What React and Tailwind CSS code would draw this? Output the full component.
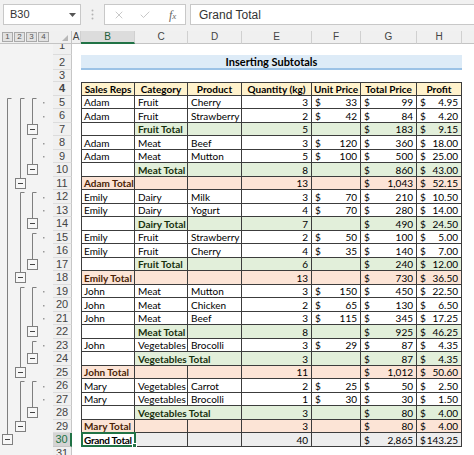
import React from "react";
import { X, Check } from "lucide-react";

// L1/L2/L3 outline codes: s = group start, l = line, m = minus button
const ROWS = [
  { n: 5, t: "d", o: "sss", b: "Adam", c: "Fruit", d: "Cherry", q: 3, u: "33", p: "99", f: "4.95" },
  { n: 6, t: "d", o: "lll", b: "Adam", c: "Fruit", d: "Strawberry", q: 2, u: "42", p: "84", f: "4.20" },
  { n: 7, t: "c", o: "llm", c: "Fruit Total", q: 5, p: "183", f: "9.15" },
  { n: 8, t: "d", o: "lls", b: "Adam", c: "Meat", d: "Beef", q: 3, u: "120", p: "360", f: "18.00" },
  { n: 9, t: "d", o: "lll", b: "Adam", c: "Meat", d: "Mutton", q: 5, u: "100", p: "500", f: "25.00" },
  { n: 10, t: "c", o: "llm", c: "Meat Total", q: 8, p: "860", f: "43.00" },
  { n: 11, t: "r", o: "lm-", b: "Adam Total", q: 13, p: "1,043", f: "52.15" },
  { n: 12, t: "d", o: "lss", b: "Emily", c: "Dairy", d: "Milk", q: 3, u: "70", p: "210", f: "10.50" },
  { n: 13, t: "d", o: "lll", b: "Emily", c: "Dairy", d: "Yogurt", q: 4, u: "70", p: "280", f: "14.00" },
  { n: 14, t: "c", o: "llm", c: "Dairy Total", q: 7, p: "490", f: "24.50" },
  { n: 15, t: "d", o: "lls", b: "Emily", c: "Fruit", d: "Strawberry", q: 2, u: "50", p: "100", f: "5.00" },
  { n: 16, t: "d", o: "lll", b: "Emily", c: "Fruit", d: "Cherry", q: 4, u: "35", p: "140", f: "7.00" },
  { n: 17, t: "c", o: "llm", c: "Fruit Total", q: 6, p: "240", f: "12.00" },
  { n: 18, t: "r", o: "lm-", b: "Emily Total", q: 13, p: "730", f: "36.50" },
  { n: 19, t: "d", o: "lss", b: "John", c: "Meat", d: "Mutton", q: 3, u: "150", p: "450", f: "22.50" },
  { n: 20, t: "d", o: "lll", b: "John", c: "Meat", d: "Chicken", q: 2, u: "65", p: "130", f: "6.50" },
  { n: 21, t: "d", o: "lll", b: "John", c: "Meat", d: "Beef", q: 3, u: "115", p: "345", f: "17.25" },
  { n: 22, t: "c", o: "llm", c: "Meat Total", q: 8, p: "925", f: "46.25" },
  { n: 23, t: "d", o: "lls", b: "John", c: "Vegetables", d: "Brocolli", q: 3, u: "29", p: "87", f: "4.35" },
  { n: 24, t: "c", o: "llm", c: "Vegetables Total", q: 3, p: "87", f: "4.35" },
  { n: 25, t: "r", o: "lm-", b: "John Total", q: 11, p: "1,012", f: "50.60" },
  { n: 26, t: "d", o: "lss", b: "Mary", c: "Vegetables", d: "Carrot", q: 2, u: "25", p: "50", f: "2.50" },
  { n: 27, t: "d", o: "lll", b: "Mary", c: "Vegetables", d: "Brocolli", q: 1, u: "30", p: "30", f: "1.50" },
  { n: 28, t: "c", o: "llm", c: "Vegetables Total", q: 3, p: "80", f: "4.00" },
  { n: 29, t: "r", o: "lm-", b: "Mary Total", q: 3, p: "80", f: "4.00" },
  { n: 30, t: "g", o: "m--", b: "Grand Total", q: 40, p: "2,865", f: "143.25" },
];

const LINE = "#7f7f7f";

function Outline({ codes, dot, h }) {
  const xs = [7, 20, 32];
  return (
    <svg width="53" height={h} className="block">
      {codes.split("").map((c, i) => {
        const x = xs[i] + 0.5;
        if (c === "s")
          return (
            <g key={i} stroke={LINE}>
              <line x1={x} y1={2.5} x2={x} y2={h} />
              <line x1={x} y1={2.5} x2={x + 4} y2={2.5} />
            </g>
          );
        if (c === "l") return <line key={i} x1={x} y1={0} x2={x} y2={h} stroke={LINE} />;
        if (c === "m") {
          const top = Math.floor((h - 11) / 2);
          return (
            <g key={i}>
              <line x1={x} y1={0} x2={x} y2={top} stroke={LINE} />
              <rect x={xs[i] - 4.5} y={top + 0.5} width="10" height="10" fill="#f7f7f7" stroke={LINE} />
              <line x1={xs[i] - 2} y1={top + 5.5} x2={xs[i] + 3} y2={top + 5.5} stroke="#444" />
            </g>
          );
        }
        return null;
      })}
      {dot && <rect x="43" y={Math.floor(h / 2)} width="1.5" height="1.5" fill="#999" />}
    </svg>
  );
}

function RowHead({ n, active }) {
  return (
    <div
      className={`w-[19px] shrink-0 flex items-center justify-center border-b text-[11px] font-[Liberation_Sans,sans-serif] ${
        active
          ? "bg-[#d4d4d4] text-[#217346] border-b-[#c6c6c6] border-r-2 border-r-[#217346]"
          : "bg-[#f0f0f0] text-[#444] border-b-[#dcdcdc] border-r border-r-[#c6c6c6]"
      }`}
    >
      {n}
    </div>
  );
}

const CELL = "shrink-0 border-r border-b border-[#3c3c3c] flex items-center px-[3px] whitespace-nowrap";

function Money({ v, bg, w }) {
  return (
    <div className={`${CELL} ${w} ${bg} justify-between`}>
      {v ? (
        <>
          <span>$</span>
          <span>{v}</span>
        </>
      ) : null}
    </div>
  );
}

function DataRow({ r, h }) {
  const bg =
    r.t === "c" ? "bg-[#e2efda]" : r.t === "r" ? "bg-[#fce4d6]" : r.t === "g" ? "bg-[#ededed]" : "bg-white";
  const bBg = r.t === "r" ? "bg-[#fce4d6]" : "bg-white";
  const wide = r.t === "c" && r.c.length > 12;
  return (
    <div className={`flex ${h}`}>
      <div className="w-[53px] shrink-0 bg-[#f3f3f3]">
        <Outline codes={r.o} dot={r.t === "d"} h={h === "h-[14px]" ? 14 : 13} />
      </div>
      <RowHead n={r.n} active={r.t === "g"} />
      <div className="w-[9px] shrink-0 bg-white" />
      <div
        className={`shrink-0 border-r border-b border-l border-[#3c3c3c] flex items-center pl-[2px] whitespace-nowrap w-[54px] ${bBg} relative ${
          r.t === "r" ? "font-bold text-[#4a1f06]" : r.t === "g" ? "font-bold tracking-[-0.3px]" : ""
        }`}
      >
        {r.b}
        {r.t === "g" && (
          <div className="absolute -left-[1px] -top-[1px] w-[55px] h-[15px] border-2 border-[#217346]">
            <div className="absolute -right-[3px] -bottom-[3px] w-[5px] h-[5px] bg-[#217346] border border-white" />
          </div>
        )}
      </div>
      <div
        className={`shrink-0 border-b border-[#3c3c3c] flex items-center px-[3px] whitespace-nowrap w-[53px] ${bg} ${
          wide ? "overflow-visible z-10" : "border-r"
        } ${r.t === "c" ? "font-bold text-[#17300d]" : ""}`}
      >
        {r.c}
      </div>
      <div className={`${CELL} w-[54px] ${bg}`}>{r.d}</div>
      <div className={`${CELL} w-[70px] ${bg} justify-end`}>{r.q}</div>
      <Money v={r.u} bg={bg} w="w-[49px]" />
      <Money v={r.p} bg={bg} w="w-[56px]" />
      <Money v={r.f} bg={bg} w="w-[45px]" />
      <div className="flex-1 bg-white" />
    </div>
  );
}

function ColHead({ w, label, active }) {
  return (
    <div
      className={`${w} shrink-0 flex items-center justify-center border-r border-[#d0d0d0] ${
        active ? "bg-[#dcdcdc] text-[#1e5f3a] border-b-2 border-b-[#217346]" : "border-b border-b-[#c4c4c4]"
      }`}
    >
      {label}
    </div>
  );
}

export default function App() {
  return (
    <div className="w-[474px] h-[455px] overflow-hidden bg-white text-[10px] text-black font-[Lato,sans-serif] leading-none">
      {/* formula bar */}
      <div className="h-[31px] bg-[#f1f1f1] flex items-start pt-[4px] font-[Liberation_Sans,sans-serif]">
        <div className="ml-[3px] w-[78px] h-[21px] bg-white border border-[#c8c8c8] flex items-center justify-between pl-[6px] pr-[4px] text-[11px] text-[#333]">
          <span>B30</span>
          <svg width="7" height="4" viewBox="0 0 7 4">
            <path d="M0 0h7L3.5 4z" fill="#555" />
          </svg>
        </div>
        <div className="w-[23px] h-[21px] flex items-center justify-center">
          <svg width="3" height="11" viewBox="0 0 3 11">
            <circle cx="1.5" cy="1.5" r="1" fill="#b3b3b3" />
            <circle cx="1.5" cy="5.5" r="1" fill="#b3b3b3" />
            <circle cx="1.5" cy="9.5" r="1" fill="#b3b3b3" />
          </svg>
        </div>
        <div className="w-[82px] h-[21px] bg-white border border-[#c8c8c8] flex items-center pl-[8px] text-[#b5b5b5]">
          <X size={12} strokeWidth={1.5} />
          <Check size={12} strokeWidth={1.5} className="ml-[14px]" />
          <span className="ml-[18px] text-[12px] italic font-[Liberation_Serif,serif] text-[#666]">
            f<span className="text-[9px]">x</span>
          </span>
        </div>
        <div className="ml-[4px] flex-1 h-[21px] bg-white border border-[#c8c8c8] border-r-0 flex items-center pl-[8px] text-[12px] text-[#333]">
          Grand Total
        </div>
      </div>

      {/* column headers */}
      <div className="flex h-[13px] bg-[#f0f0f0] text-[10px] text-[#444] font-[Liberation_Sans,sans-serif]">
        <div className="w-[53px] shrink-0 flex items-center gap-[1px] pl-[2px] border-b border-[#c4c4c4]">
          {[1, 2, 3, 4].map((k) => (
            <div
              key={k}
              className="w-[11px] h-[10px] bg-[#e2e2e2] border border-[#a9a9a9] flex items-center justify-center text-[8px] text-[#555]"
            >
              {k}
            </div>
          ))}
        </div>
        <div className="w-[19px] shrink-0 flex items-end justify-end pr-[3px] pb-[2px] border-r border-b border-[#c4c4c4]">
          <svg width="6" height="6" viewBox="0 0 6 6">
            <path d="M6 0v6H0z" fill="#b8b8b8" />
          </svg>
        </div>
        <ColHead w="w-[9px]" label="A" />
        <ColHead w="w-[54px]" label="B" active />
        <ColHead w="w-[53px]" label="C" />
        <ColHead w="w-[54px]" label="D" />
        <ColHead w="w-[70px]" label="E" />
        <ColHead w="w-[49px]" label="F" />
        <ColHead w="w-[56px]" label="G" />
        <ColHead w="w-[45px]" label="H" />
        <div className="flex-1 border-b border-[#c4c4c4]" />
      </div>

      {/* row 1 */}
      <div className="flex h-[11px]">
        <div className="w-[53px] shrink-0 bg-[#f3f3f3]" />
        <div className="w-[19px] shrink-0 bg-[#f0f0f0] border-r border-b border-r-[#c6c6c6] border-b-[#dcdcdc] overflow-hidden flex justify-center text-[11px] text-[#444] font-[Liberation_Sans,sans-serif]">
          <span className="-mt-[4px]">1</span>
        </div>
        <div className="flex-1 bg-white" />
      </div>

      {/* row 2: title */}
      <div className="flex h-[15px]">
        <div className="w-[53px] shrink-0 bg-[#f3f3f3]" />
        <RowHead n={2} />
        <div className="w-[9px] shrink-0 bg-white" />
        <div className="w-[381px] shrink-0 bg-[#ddebf7] border-b-2 border-[#9bc2e6] flex items-center justify-center font-bold text-[11px]">
          Inserting Subtotals
        </div>
        <div className="flex-1 bg-white" />
      </div>

      {/* row 3 */}
      <div className="flex h-[12px]">
        <div className="w-[53px] shrink-0 bg-[#f3f3f3]" />
        <RowHead n={3} />
        <div className="flex-1 bg-white" />
      </div>

      {/* row 4: table header */}
      <div className="flex h-[14px] font-bold">
        <div className="w-[53px] shrink-0 bg-[#f3f3f3]" />
        <RowHead n={4} />
        <div className="w-[9px] shrink-0 bg-white" />
        <div className={`${CELL} w-[54px] border-l border-t bg-[#fff2cc] justify-center px-0`}>Sales Reps</div>
        <div className={`${CELL} w-[53px] border-t bg-[#fff2cc] justify-center`}>Category</div>
        <div className={`${CELL} w-[54px] border-t bg-[#fff2cc] justify-center`}>Product</div>
        <div className={`${CELL} w-[70px] border-t bg-[#fff2cc] justify-center`}>Quantity (kg)</div>
        <div className={`${CELL} w-[49px] border-t bg-[#fff2cc] justify-center px-0`}>Unit Price</div>
        <div className={`${CELL} w-[56px] border-t bg-[#fff2cc] justify-center px-0`}>Total Price</div>
        <div className={`${CELL} w-[45px] border-t bg-[#fff2cc] justify-center`}>Profit</div>
        <div className="flex-1 bg-white" />
      </div>

      {ROWS.map((r, i) => (
        <DataRow key={r.n} r={r} h={i % 2 === 0 ? "h-[13px]" : "h-[14px]"} />
      ))}

      {/* row 31 */}
      <div className="flex h-[14px]">
        <div className="w-[53px] shrink-0 bg-[#f3f3f3]" />
        <RowHead n={31} />
        <div className="flex-1 bg-white" />
      </div>
    </div>
  );
}
